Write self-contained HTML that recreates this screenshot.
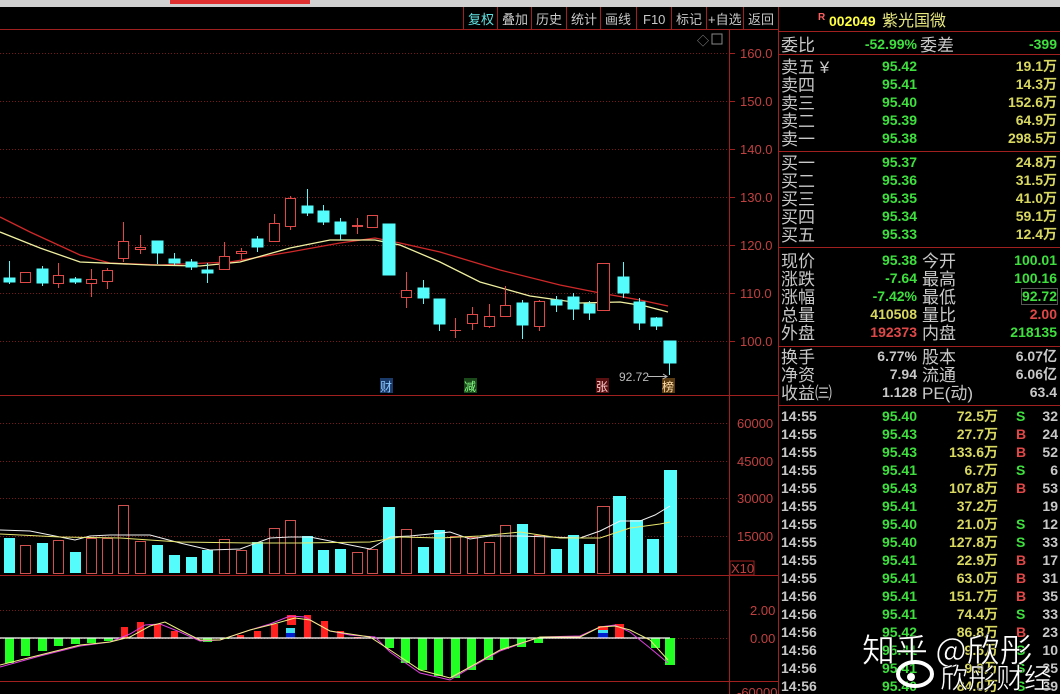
<!DOCTYPE html>
<html><head><meta charset="utf-8"><style>
html,body{margin:0;padding:0;background:#000;width:1060px;height:694px;overflow:hidden}
svg{display:block}
text{font-family:"Liberation Sans","Noto Sans CJK SC",sans-serif}
.ax{fill:#c04040;font-size:13px}
.lb{fill:#c8c8c8;font-size:17px}
.g{fill:#3ee03e;font-size:14px;font-weight:bold}
.y{fill:#d8d860;font-size:14px;font-weight:bold}
.r{fill:#e04848;font-size:14px;font-weight:bold}
.w{fill:#c8c8c8;font-size:14px;font-weight:bold}
.tb{fill:#c8c8c8;font-size:13px}
</style></head><body>
<svg width="1060" height="694" xmlns="http://www.w3.org/2000/svg">
<rect x="0" y="0" width="1060" height="694" fill="#000"/>
<rect x="0" y="0" width="1060" height="7" fill="#d0d0d0"/>
<rect x="170" y="0" width="140" height="4" fill="#e03030"/>
<g stroke="#a02020" stroke-width="1">
<line x1="0" y1="29.5" x2="778" y2="29.5"/>
<line x1="463.5" y1="7" x2="463.5" y2="29"/>
<line x1="497.5" y1="7" x2="497.5" y2="29"/>
<line x1="531.5" y1="7" x2="531.5" y2="29"/>
<line x1="566.5" y1="7" x2="566.5" y2="29"/>
<line x1="600.5" y1="7" x2="600.5" y2="29"/>
<line x1="636.5" y1="7" x2="636.5" y2="29"/>
<line x1="671.5" y1="7" x2="671.5" y2="29"/>
<line x1="706.5" y1="7" x2="706.5" y2="29"/>
<line x1="743.5" y1="7" x2="743.5" y2="29"/>
<line x1="778.5" y1="7" x2="778.5" y2="694"/>
<line x1="729.5" y1="29" x2="729.5" y2="694"/>
</g>
<text x="468" y="24" style="fill:#60e0e0;font-size:13px">复权</text>
<text x="502" y="24" class="tb">叠加</text>
<text x="536" y="24" class="tb">历史</text>
<text x="571" y="24" class="tb">统计</text>
<text x="605" y="24" class="tb">画线</text>
<text x="643" y="24" class="tb">F10</text>
<text x="676" y="24" class="tb">标记</text>
<text x="708" y="24" class="tb">+自选</text>
<text x="748" y="24" class="tb">返回</text>
<text x="697" y="45" style="fill:#888;font-size:12px">◇</text>
<rect x="712" y="34" width="10" height="10" fill="none" stroke="#888"/>
<g stroke="#7a1818" stroke-width="1" stroke-dasharray="1,2">
<line x1="0" y1="53.5" x2="729" y2="53.5"/><line x1="0" y1="101.5" x2="729" y2="101.5"/>
<line x1="0" y1="149.5" x2="729" y2="149.5"/><line x1="0" y1="197.5" x2="729" y2="197.5"/>
<line x1="0" y1="245.5" x2="729" y2="245.5"/><line x1="0" y1="293.5" x2="729" y2="293.5"/>
<line x1="0" y1="341.5" x2="729" y2="341.5"/>
<line x1="0" y1="423.5" x2="729" y2="423.5"/><line x1="0" y1="461.5" x2="729" y2="461.5"/>
<line x1="0" y1="498.5" x2="729" y2="498.5"/><line x1="0" y1="536.5" x2="729" y2="536.5"/>
<line x1="0" y1="610.5" x2="729" y2="610.5"/><line x1="0" y1="638.5" x2="729" y2="638.5"/>
</g>
<g stroke="#a02020">
<line x1="0" y1="395.5" x2="779" y2="395.5"/>
<line x1="0" y1="575.5" x2="779" y2="575.5"/>
<line x1="0" y1="681.5" x2="779" y2="681.5"/>
<line x1="729" y1="53.5" x2="735" y2="53.5"/><line x1="729" y1="101.5" x2="735" y2="101.5"/>
<line x1="729" y1="149.5" x2="735" y2="149.5"/><line x1="729" y1="197.5" x2="735" y2="197.5"/>
<line x1="729" y1="245.5" x2="735" y2="245.5"/><line x1="729" y1="293.5" x2="735" y2="293.5"/>
<line x1="729" y1="341.5" x2="735" y2="341.5"/>
</g>
<text x="740" y="58" class="ax">160.0</text><text x="740" y="106" class="ax">150.0</text>
<text x="740" y="154" class="ax">140.0</text><text x="740" y="202" class="ax">130.0</text>
<text x="740" y="250" class="ax">120.0</text><text x="740" y="298" class="ax">110.0</text>
<text x="740" y="346" class="ax">100.0</text>
<text x="737" y="428" class="ax">60000</text><text x="737" y="466" class="ax">45000</text>
<text x="737" y="503" class="ax">30000</text><text x="737" y="541" class="ax">15000</text>
<rect x="730" y="561" width="24" height="14" fill="none" stroke="#a02020"/>
<text x="731" y="573" class="ax">X10</text>
<text x="750" y="615" class="ax">2.00</text><text x="750" y="643" class="ax">0.00</text>
<text x="737" y="697" class="ax">-60000</text>

<polyline fill="none" stroke="#d02828" stroke-width="1.3" points="0,217 30,232 80,255 110,263 160,265 230,262 290,252 340,243 375,238 400,243 440,252 500,270 560,285 600,293 640,300 668,306"/>
<polyline fill="none" stroke="#f0f0a0" stroke-width="1.3" points="0,232 40,248 80,262 150,265 200,266 240,262 290,248 330,240 375,240 400,245 440,262 480,282 530,296 580,303 620,302 645,306 668,312"/>

<g stroke-width="1">
<g stroke="#54fcfc" fill="#54fcfc">
<line x1="9.5" y1="261" x2="9.5" y2="284"/><rect x="4" y="278" width="11" height="4"/>
<line x1="42.5" y1="266" x2="42.5" y2="286"/><rect x="37" y="269" width="11" height="14"/>
<line x1="75.5" y1="277" x2="75.5" y2="284"/><rect x="70" y="279" width="11" height="3"/>
<line x1="157.5" y1="241" x2="157.5" y2="264"/><rect x="152" y="241" width="11" height="12"/>
<line x1="174.5" y1="253" x2="174.5" y2="265"/><rect x="169" y="259" width="11" height="4"/>
<line x1="191.5" y1="259" x2="191.5" y2="270"/><rect x="186" y="262" width="11" height="5"/>
<line x1="207.5" y1="263" x2="207.5" y2="283"/><rect x="202" y="270" width="11" height="3"/>
<line x1="257.5" y1="236" x2="257.5" y2="252"/><rect x="252" y="239" width="11" height="8"/>
<line x1="307.5" y1="189" x2="307.5" y2="216"/><rect x="302" y="206" width="11" height="7"/>
<line x1="323.5" y1="205" x2="323.5" y2="225"/><rect x="318" y="211" width="11" height="11"/>
<line x1="340.5" y1="218" x2="340.5" y2="240"/><rect x="335" y="222" width="11" height="12"/>
<rect x="383" y="224" width="12" height="51"/>
<line x1="423.5" y1="280" x2="423.5" y2="304"/><rect x="418" y="288" width="11" height="10"/>
<line x1="439.5" y1="299" x2="439.5" y2="331"/><rect x="434" y="299" width="11" height="25"/>
<line x1="522.5" y1="300" x2="522.5" y2="339"/><rect x="517" y="303" width="11" height="22"/>
<line x1="556.5" y1="296" x2="556.5" y2="312"/><rect x="551" y="300" width="11" height="5"/>
<line x1="573.5" y1="293" x2="573.5" y2="320"/><rect x="568" y="297" width="11" height="12"/>
<line x1="589.5" y1="301" x2="589.5" y2="320"/><rect x="584" y="304" width="11" height="9"/>
<line x1="623.5" y1="262" x2="623.5" y2="298"/><rect x="618" y="277" width="11" height="16"/>
<line x1="639.5" y1="298" x2="639.5" y2="330"/><rect x="634" y="302" width="11" height="21"/>
<line x1="656.5" y1="317" x2="656.5" y2="330"/><rect x="651" y="318" width="11" height="8"/>
<line x1="669.5" y1="341" x2="669.5" y2="375"/><rect x="664" y="341" width="12" height="22"/>
</g>
<g stroke="#e04848" fill="#000">
<rect x="20.5" y="272.5" width="10" height="10"/>
<line x1="58.5" y1="263" x2="58.5" y2="288"/><rect x="53.5" y="275.5" width="10" height="8"/>
<line x1="91.5" y1="269" x2="91.5" y2="297"/><rect x="86.5" y="279.5" width="10" height="4"/>
<line x1="107.5" y1="268" x2="107.5" y2="289"/><rect x="102.5" y="270.5" width="10" height="11"/>
<line x1="123.5" y1="222" x2="123.5" y2="262"/><rect x="118.5" y="241.5" width="10" height="17"/>
<line x1="140.5" y1="235" x2="140.5" y2="254"/><rect x="135.5" y="247.5" width="10" height="2"/>
<line x1="224.5" y1="242" x2="224.5" y2="270"/><rect x="219.5" y="256.5" width="10" height="13"/>
<line x1="241.5" y1="248" x2="241.5" y2="260"/><rect x="236.5" y="251.5" width="10" height="2"/>
<line x1="274.5" y1="214" x2="274.5" y2="242"/><rect x="269.5" y="223.5" width="10" height="18"/>
<line x1="290.5" y1="196" x2="290.5" y2="230"/><rect x="285.5" y="198.5" width="10" height="28"/>
<line x1="357.5" y1="218" x2="357.5" y2="234"/><rect x="352.5" y="225.5" width="10" height="1"/>
<rect x="367.5" y="215.5" width="10" height="12"/>
<line x1="406.5" y1="272" x2="406.5" y2="308"/><rect x="401.5" y="290.5" width="10" height="7"/>
<line x1="455.5" y1="318" x2="455.5" y2="338"/><line x1="450" y1="330.5" x2="461" y2="330.5"/>
<line x1="472.5" y1="307" x2="472.5" y2="330"/><rect x="467.5" y="314.5" width="10" height="9"/>
<line x1="489.5" y1="304" x2="489.5" y2="328"/><rect x="484.5" y="316.5" width="10" height="10"/>
<line x1="505.5" y1="286" x2="505.5" y2="317"/><rect x="500.5" y="305.5" width="10" height="11"/>
<line x1="539.5" y1="300" x2="539.5" y2="331"/><rect x="534.5" y="301.5" width="10" height="25"/>
<rect x="597.5" y="263.5" width="12" height="47"/>
</g>
</g>
<rect x="380" y="378" width="13" height="15" fill="#1a3a6a"/><text x="380" y="391" style="fill:#8ac8ff;font-size:12px">财</text>
<rect x="464" y="378" width="13" height="15" fill="#1a4a1a"/><text x="464" y="391" style="fill:#8f8;font-size:12px">减</text>
<rect x="596" y="378" width="13" height="15" fill="#5a1010"/><text x="596" y="391" style="fill:#fcc;font-size:12px">张</text>
<rect x="662" y="378" width="13" height="15" fill="#5a3a10"/><text x="662" y="391" style="fill:#fda;font-size:12px">榜</text>
<text x="619" y="381" style="fill:#bbb;font-size:12px">92.72</text>
<line x1="648" y1="376.5" x2="667" y2="376.5" stroke="#bbb"/><polyline points="663,374 667,376.5 663,379" fill="none" stroke="#bbb"/>

<g fill="#54fcfc">
<rect x="4" y="538" width="11" height="35"/><rect x="37" y="543" width="11" height="30"/><rect x="70" y="552" width="11" height="21"/>
<rect x="152" y="545" width="11" height="28"/><rect x="169" y="555" width="11" height="18"/><rect x="186" y="557" width="11" height="16"/>
<rect x="202" y="550" width="11" height="23"/><rect x="252" y="542" width="11" height="31"/><rect x="302" y="536" width="11" height="37"/>
<rect x="318" y="550" width="11" height="23"/><rect x="335" y="549" width="11" height="24"/><rect x="383" y="507" width="12" height="66"/>
<rect x="418" y="547" width="11" height="26"/><rect x="434" y="530" width="11" height="43"/><rect x="517" y="524" width="11" height="49"/>
<rect x="551" y="549" width="11" height="24"/><rect x="568" y="535" width="11" height="38"/><rect x="584" y="544" width="11" height="29"/>
<rect x="613" y="496" width="13" height="77"/><rect x="630" y="520" width="13" height="53"/><rect x="647" y="539" width="12" height="34"/>
<rect x="664" y="470" width="13" height="103"/>
</g>
<g fill="none" stroke="#d05050">
<rect x="20.5" y="545.5" width="10" height="28"/><rect x="53.5" y="540.5" width="10" height="33"/><rect x="86.5" y="538.5" width="10" height="35"/>
<rect x="102.5" y="538.5" width="10" height="35"/><rect x="118.5" y="505.5" width="10" height="68"/><rect x="135.5" y="541.5" width="10" height="32"/>
<rect x="219.5" y="539.5" width="10" height="34"/><rect x="236.5" y="550.5" width="10" height="23"/><rect x="269.5" y="528.5" width="10" height="45"/>
<rect x="285.5" y="520.5" width="10" height="53"/><rect x="352.5" y="552.5" width="10" height="21"/><rect x="367.5" y="549.5" width="10" height="24"/>
<rect x="401.5" y="529.5" width="10" height="44"/><rect x="450.5" y="536.5" width="10" height="37"/><rect x="467.5" y="537.5" width="10" height="36"/>
<rect x="484.5" y="542.5" width="10" height="31"/><rect x="500.5" y="525.5" width="10" height="48"/><rect x="534.5" y="535.5" width="10" height="38"/>
<rect x="597.5" y="506.5" width="12" height="67"/>
</g>
<polyline fill="none" stroke="#f0f0f0" points="0,530 30,531 60,537 75,540 90,536 110,535 125,535 150,535 180,543 210,550 240,549 270,538 290,537 310,537 350,545 370,549 390,537 410,536 430,534 450,532 470,539 490,536 520,536 550,537 580,538 600,531 620,521 640,521 655,515 670,506"/>
<polyline fill="none" stroke="#e8e870" points="0,534 60,537 120,538 180,542 250,543 300,543 370,542 400,537 440,538 480,536 520,532 560,538 600,538 630,528 660,524 670,522"/>

<g fill="#22ff22">
<rect x="5" y="638" width="9" height="25"/><rect x="21" y="638" width="9" height="18"/><rect x="38" y="638" width="9" height="13"/>
<rect x="54" y="638" width="9" height="8"/><rect x="71" y="638" width="9" height="6"/><rect x="87" y="638" width="9" height="5"/>
<rect x="104" y="638" width="9" height="3"/><rect x="203" y="638" width="9" height="4"/><rect x="220" y="638" width="9" height="1"/>
<rect x="385" y="638" width="9" height="10"/><rect x="401" y="638" width="9" height="25"/><rect x="418" y="638" width="9" height="32"/>
<rect x="434" y="638" width="9" height="38"/><rect x="451" y="638" width="9" height="40"/><rect x="467" y="638" width="9" height="32"/>
<rect x="484" y="638" width="9" height="22"/><rect x="500" y="638" width="9" height="11"/><rect x="517" y="638" width="9" height="9"/>
<rect x="534" y="638" width="9" height="5"/><rect x="651" y="638" width="9" height="10"/><rect x="665" y="638" width="10" height="27"/>
</g>
<g fill="#ff2020">
<rect x="121" y="627" width="7" height="11"/><rect x="137" y="622" width="7" height="16"/><rect x="154" y="624" width="7" height="14"/>
<rect x="171" y="631" width="7" height="7"/><rect x="237" y="635" width="7" height="3"/><rect x="254" y="631" width="7" height="7"/>
<rect x="271" y="624" width="7" height="14"/><rect x="287" y="615" width="9" height="10"/><rect x="304" y="615" width="7" height="23"/>
<rect x="321" y="621" width="7" height="17"/><rect x="337" y="631" width="7" height="7"/><rect x="354" y="637" width="7" height="1"/>
<rect x="598" y="626" width="10" height="4"/><rect x="615" y="624" width="9" height="14"/>
</g>
<rect x="286" y="628" width="9" height="5" fill="#40e0f0"/><rect x="286" y="633" width="9" height="5" fill="#0020d0"/>
<rect x="598" y="630" width="10" height="3" fill="#40e0f0"/><rect x="598" y="633" width="10" height="5" fill="#0020d0"/>
<line x1="0" y1="638" x2="670" y2="638" stroke="#fff" stroke-width="1.2"/>
<polyline fill="none" stroke="#e040e0" points="0,667 40,656 80,646 110,642 130,634 145,625 160,624 180,632 200,641 220,640 250,630 270,624 290,616 305,617 330,631 350,635 375,637 390,652 420,673 450,680 470,668 500,651 540,637 580,636 600,627 615,625 630,632 650,648 668,663"/>
<polyline fill="none" stroke="#f0f080" points="0,665 40,655 80,645 110,642 130,637 150,626 165,622 180,630 200,640 220,640 250,630 270,625 295,618 310,620 330,631 350,634 370,637 390,650 420,670 450,678 470,667 500,650 540,637 580,637 600,627 615,626 630,630 650,640 668,660"/>

<g stroke="#a02020">
<line x1="779" y1="31.5" x2="1060" y2="31.5"/><line x1="779" y1="54.5" x2="1060" y2="54.5"/>
<line x1="779" y1="151.5" x2="1060" y2="151.5"/><line x1="779" y1="247.5" x2="1060" y2="247.5"/>
<line x1="779" y1="346.5" x2="1060" y2="346.5"/><line x1="779" y1="405.5" x2="1060" y2="405.5"/>
</g>
<text x="818" y="20" style="fill:#ff6060;font-size:10px;font-weight:bold">R</text>
<text x="829" y="26" style="fill:#ffff40;font-size:14px;font-weight:bold">002049</text>
<text x="882" y="26" style="fill:#e8e880;font-size:16px">紫光国微</text>
<text x="781" y="51" class="lb">委比</text><text x="917" y="49" class="g" text-anchor="end">-52.99%</text>
<text x="920" y="51" class="lb">委差</text><text x="1057" y="49" class="g" text-anchor="end">-399</text>

<text x="781" y="73" class="lb">卖五 ¥</text><text x="917" y="71" class="g" text-anchor="end">95.42</text><text x="1057" y="71" class="y" text-anchor="end">19.1万</text>
<text x="781" y="91" class="lb">卖四</text><text x="917" y="89" class="g" text-anchor="end">95.41</text><text x="1057" y="89" class="y" text-anchor="end">14.3万</text>
<text x="781" y="109" class="lb">卖三</text><text x="917" y="107" class="g" text-anchor="end">95.40</text><text x="1057" y="107" class="y" text-anchor="end">152.6万</text>
<text x="781" y="127" class="lb">卖二</text><text x="917" y="125" class="g" text-anchor="end">95.39</text><text x="1057" y="125" class="y" text-anchor="end">64.9万</text>
<text x="781" y="145" class="lb">卖一</text><text x="917" y="143" class="g" text-anchor="end">95.38</text><text x="1057" y="143" class="y" text-anchor="end">298.5万</text>

<text x="781" y="169" class="lb">买一</text><text x="917" y="167" class="g" text-anchor="end">95.37</text><text x="1057" y="167" class="y" text-anchor="end">24.8万</text>
<text x="781" y="187" class="lb">买二</text><text x="917" y="185" class="g" text-anchor="end">95.36</text><text x="1057" y="185" class="y" text-anchor="end">31.5万</text>
<text x="781" y="205" class="lb">买三</text><text x="917" y="203" class="g" text-anchor="end">95.35</text><text x="1057" y="203" class="y" text-anchor="end">41.0万</text>
<text x="781" y="223" class="lb">买四</text><text x="917" y="221" class="g" text-anchor="end">95.34</text><text x="1057" y="221" class="y" text-anchor="end">59.1万</text>
<text x="781" y="241" class="lb">买五</text><text x="917" y="239" class="g" text-anchor="end">95.33</text><text x="1057" y="239" class="y" text-anchor="end">12.4万</text>

<text x="781" y="267" class="lb">现价</text><text x="917" y="265" class="g" text-anchor="end">95.38</text><text x="922" y="267" class="lb">今开</text><text x="1057" y="265" class="g" text-anchor="end">100.01</text>
<text x="781" y="285" class="lb">涨跌</text><text x="917" y="283" class="g" text-anchor="end">-7.64</text><text x="922" y="285" class="lb">最高</text><text x="1057" y="283" class="g" text-anchor="end">100.16</text>
<text x="781" y="303" class="lb">涨幅</text><text x="917" y="301" class="g" text-anchor="end">-7.42%</text><text x="922" y="303" class="lb">最低</text>
<rect x="1021.5" y="288.5" width="36" height="16" fill="none" stroke="#555"/><text x="1057" y="301" class="g" text-anchor="end">92.72</text>
<text x="781" y="321" class="lb">总量</text><text x="917" y="319" class="y" text-anchor="end">410508</text><text x="922" y="321" class="lb">量比</text><text x="1057" y="319" class="r" text-anchor="end">2.00</text>
<text x="781" y="339" class="lb">外盘</text><text x="917" y="337" class="r" text-anchor="end">192373</text><text x="922" y="339" class="lb">内盘</text><text x="1057" y="337" class="g" text-anchor="end">218135</text>

<text x="781" y="363" class="lb">换手</text><text x="917" y="361" class="w" text-anchor="end">6.77%</text><text x="922" y="363" class="lb">股本</text><text x="1057" y="361" class="w" text-anchor="end">6.07亿</text>
<text x="781" y="381" class="lb">净资</text><text x="917" y="379" class="w" text-anchor="end">7.94</text><text x="922" y="381" class="lb">流通</text><text x="1057" y="379" class="w" text-anchor="end">6.06亿</text>
<text x="781" y="399" class="lb">收益㈢</text><text x="917" y="397" class="w" text-anchor="end">1.128</text><text x="922" y="399" class="lb">PE(动)</text><text x="1057" y="397" class="w" text-anchor="end">63.4</text>

<g>
<text x="781" y="421" class="w">14:55</text><text x="917" y="421" class="g" text-anchor="end">95.40</text><text x="998" y="421" class="y" text-anchor="end">72.5万</text><text x="1016" y="421" class="g">S</text><text x="1058" y="421" class="w" text-anchor="end">32</text>
<text x="781" y="439" class="w">14:55</text><text x="917" y="439" class="g" text-anchor="end">95.43</text><text x="998" y="439" class="y" text-anchor="end">27.7万</text><text x="1016" y="439" class="r">B</text><text x="1058" y="439" class="w" text-anchor="end">24</text>
<text x="781" y="457" class="w">14:55</text><text x="917" y="457" class="g" text-anchor="end">95.43</text><text x="998" y="457" class="y" text-anchor="end">133.6万</text><text x="1016" y="457" class="r">B</text><text x="1058" y="457" class="w" text-anchor="end">52</text>
<text x="781" y="475" class="w">14:55</text><text x="917" y="475" class="g" text-anchor="end">95.41</text><text x="998" y="475" class="y" text-anchor="end">6.7万</text><text x="1016" y="475" class="g">S</text><text x="1058" y="475" class="w" text-anchor="end">6</text>
<text x="781" y="493" class="w">14:55</text><text x="917" y="493" class="g" text-anchor="end">95.43</text><text x="998" y="493" class="y" text-anchor="end">107.8万</text><text x="1016" y="493" class="r">B</text><text x="1058" y="493" class="w" text-anchor="end">53</text>
<text x="781" y="511" class="w">14:55</text><text x="917" y="511" class="g" text-anchor="end">95.41</text><text x="998" y="511" class="y" text-anchor="end">37.2万</text><text x="1058" y="511" class="w" text-anchor="end">19</text>
<text x="781" y="529" class="w">14:55</text><text x="917" y="529" class="g" text-anchor="end">95.40</text><text x="998" y="529" class="y" text-anchor="end">21.0万</text><text x="1016" y="529" class="g">S</text><text x="1058" y="529" class="w" text-anchor="end">12</text>
<text x="781" y="547" class="w">14:55</text><text x="917" y="547" class="g" text-anchor="end">95.40</text><text x="998" y="547" class="y" text-anchor="end">127.8万</text><text x="1016" y="547" class="g">S</text><text x="1058" y="547" class="w" text-anchor="end">33</text>
<text x="781" y="565" class="w">14:55</text><text x="917" y="565" class="g" text-anchor="end">95.41</text><text x="998" y="565" class="y" text-anchor="end">22.9万</text><text x="1016" y="565" class="r">B</text><text x="1058" y="565" class="w" text-anchor="end">17</text>
<text x="781" y="583" class="w">14:55</text><text x="917" y="583" class="g" text-anchor="end">95.41</text><text x="998" y="583" class="y" text-anchor="end">63.0万</text><text x="1016" y="583" class="r">B</text><text x="1058" y="583" class="w" text-anchor="end">31</text>
<text x="781" y="601" class="w">14:56</text><text x="917" y="601" class="g" text-anchor="end">95.41</text><text x="998" y="601" class="y" text-anchor="end">151.7万</text><text x="1016" y="601" class="r">B</text><text x="1058" y="601" class="w" text-anchor="end">35</text>
<text x="781" y="619" class="w">14:56</text><text x="917" y="619" class="g" text-anchor="end">95.41</text><text x="998" y="619" class="y" text-anchor="end">74.4万</text><text x="1016" y="619" class="g">S</text><text x="1058" y="619" class="w" text-anchor="end">33</text>
<text x="781" y="637" class="w">14:56</text><text x="917" y="637" class="g" text-anchor="end">95.42</text><text x="998" y="637" class="y" text-anchor="end">86.8万</text><text x="1016" y="637" class="r">B</text><text x="1058" y="637" class="w" text-anchor="end">23</text>
<text x="781" y="655" class="w">14:56</text><text x="917" y="655" class="g" text-anchor="end">95.41</text><text x="998" y="655" class="y" text-anchor="end">9.6万</text><text x="1016" y="655" class="g">S</text><text x="1058" y="655" class="w" text-anchor="end">10</text>
<text x="781" y="673" class="w">14:56</text><text x="917" y="673" class="g" text-anchor="end">95.41</text><text x="998" y="673" class="y" text-anchor="end">9.9万</text><text x="1016" y="673" class="g">S</text><text x="1058" y="673" class="w" text-anchor="end">35</text>
<text x="781" y="691" class="w">14:56</text><text x="917" y="691" class="g" text-anchor="end">95.40</text><text x="998" y="691" class="y" text-anchor="end">84.0万</text><text x="1016" y="691" class="g">S</text><text x="1058" y="691" class="w" text-anchor="end">39</text>
</g>
<text x="862" y="662" style="fill:#fff;font-size:33px;font-family:'Noto Sans CJK SC',sans-serif" stroke="#000" stroke-width="0.5">知乎 @欣彤</text>
<ellipse cx="915" cy="674" rx="17" ry="12" fill="none" stroke="#fff" stroke-width="4"/>
<circle cx="911" cy="677" r="4" fill="#fff"/>
<text x="940" y="688" style="fill:#fff;font-size:28px;font-family:'Noto Sans CJK SC',sans-serif" stroke="#000" stroke-width="0.5">欣彤财经</text>
</svg>
</body></html>
